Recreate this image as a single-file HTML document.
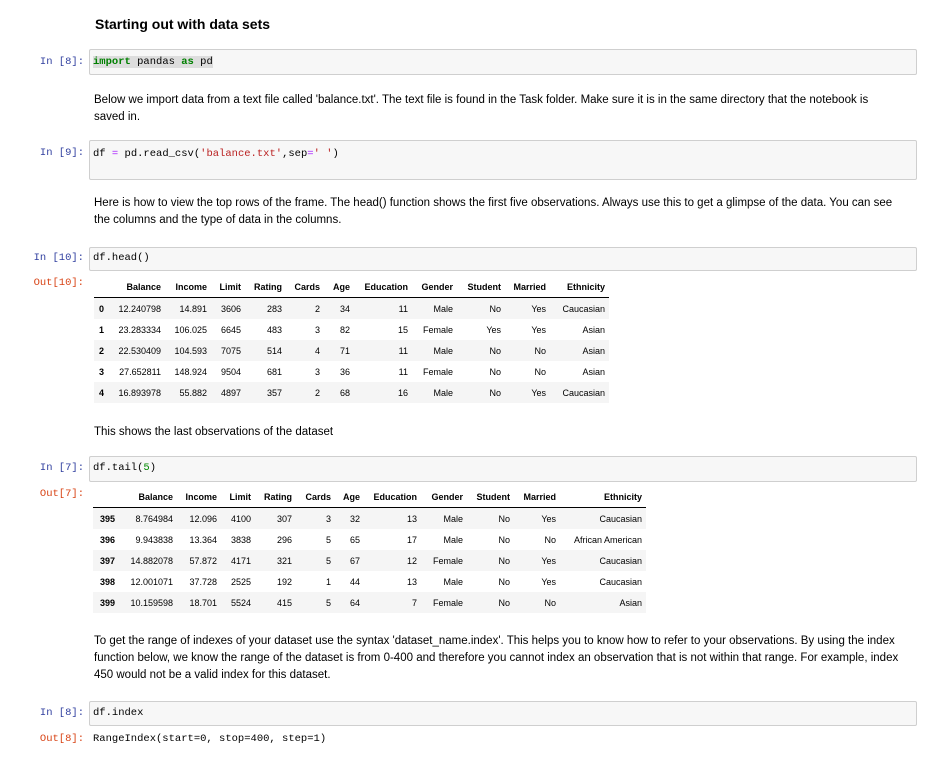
<!DOCTYPE html>
<html><head><meta charset="utf-8"><style>
body{margin:0;width:935px;height:761px;background:#fff;position:relative;font-family:"Liberation Sans",Arial,sans-serif;color:#000;overflow:hidden}
.a{position:absolute}
.p{position:absolute;font-family:"Liberation Mono",monospace;font-size:10.5px;text-align:right;width:84px;left:0;line-height:13px}
.in{color:#303f9f}.out{color:#d84315}
.box{position:absolute;left:89px;width:828px;background:#f7f7f7;border:1px solid #cfcfcf;border-radius:2px;box-sizing:border-box}
.code{position:absolute;left:93px;font-family:"Liberation Mono",monospace;font-size:10.5px;line-height:13px;white-space:pre}
.txt{position:absolute;left:94px;width:815px;font-size:11.5px;line-height:17px}
table{position:absolute;border-collapse:collapse;font-size:9px;table-layout:fixed}
td,th{text-align:right;padding:0 4px 0 0;height:21px;white-space:nowrap;overflow:visible}
th{font-weight:bold}
thead th{border-bottom:1px solid #000;height:20px}
tbody tr:nth-child(odd){background:#f5f5f5}
.k{color:#008000;font-weight:bold}.s{color:#ba2121}.o{color:#aa22ff}.n{color:#080}
</style></head><body>
<div class="a" style="left:95px;top:16px;font-size:14px;font-weight:bold">Starting out with data sets</div>

<div class="p in" style="top:56px">In [8]:</div>
<div class="box" style="top:49px;height:26px"></div>
<div class="code" style="top:56px"><span style="background:#ddd"><span class="k">import</span> pandas <span class="k">as</span> pd</span></div>

<div class="txt" style="top:92px;width:795px">Below we import data from a text file called 'balance.txt'. The text file is found in the Task folder. Make sure it is in the same directory that the notebook is saved in.</div>

<div class="p in" style="top:147px">In [9]:</div>
<div class="box" style="top:140px;height:40px"></div>
<div class="code" style="top:148px">df <span class="o">=</span> pd.read_csv(<span class="s">'balance.txt'</span>,sep<span class="o">=</span><span class="s">' '</span>)</div>

<div class="txt" style="top:195px">Here is how to view the top rows of the frame. The head() function shows the first five observations. Always use this to get a glimpse of the data. You can see the columns and the type of data in the columns.</div>

<div class="p in" style="top:252px">In [10]:</div>
<div class="box" style="top:247px;height:24px"></div>
<div class="code" style="top:252px">df.head()</div>
<div class="p out" style="top:277px">Out[10]:</div>

<table style="left:94px;top:277px;width:515px">
<colgroup><col style="width:14px"><col style="width:57px"><col style="width:46px"><col style="width:34px"><col style="width:41px"><col style="width:38px"><col style="width:30px"><col style="width:58px"><col style="width:45px"><col style="width:48px"><col style="width:45px"><col style="width:59px"></colgroup>
<thead><tr><th></th><th>Balance</th><th>Income</th><th>Limit</th><th>Rating</th><th>Cards</th><th>Age</th><th>Education</th><th>Gender</th><th>Student</th><th>Married</th><th>Ethnicity</th></tr></thead>
<tbody>
<tr><th>0</th><td>12.240798</td><td>14.891</td><td>3606</td><td>283</td><td>2</td><td>34</td><td>11</td><td>Male</td><td>No</td><td>Yes</td><td>Caucasian</td></tr>
<tr><th>1</th><td>23.283334</td><td>106.025</td><td>6645</td><td>483</td><td>3</td><td>82</td><td>15</td><td>Female</td><td>Yes</td><td>Yes</td><td>Asian</td></tr>
<tr><th>2</th><td>22.530409</td><td>104.593</td><td>7075</td><td>514</td><td>4</td><td>71</td><td>11</td><td>Male</td><td>No</td><td>No</td><td>Asian</td></tr>
<tr><th>3</th><td>27.652811</td><td>148.924</td><td>9504</td><td>681</td><td>3</td><td>36</td><td>11</td><td>Female</td><td>No</td><td>No</td><td>Asian</td></tr>
<tr><th>4</th><td>16.893978</td><td>55.882</td><td>4897</td><td>357</td><td>2</td><td>68</td><td>16</td><td>Male</td><td>No</td><td>Yes</td><td>Caucasian</td></tr>
</tbody></table>

<div class="txt" style="top:424px">This shows the last observations of the dataset</div>

<div class="p in" style="top:462px">In [7]:</div>
<div class="box" style="top:456px;height:26px"></div>
<div class="code" style="top:462px">df.tail(<span class="n">5</span>)</div>
<div class="p out" style="top:488px">Out[7]:</div>

<table style="left:93px;top:487px;width:553px">
<colgroup><col style="width:26px"><col style="width:58px"><col style="width:44px"><col style="width:34px"><col style="width:41px"><col style="width:39px"><col style="width:29px"><col style="width:57px"><col style="width:46px"><col style="width:47px"><col style="width:46px"><col style="width:86px"></colgroup>
<thead><tr><th></th><th>Balance</th><th>Income</th><th>Limit</th><th>Rating</th><th>Cards</th><th>Age</th><th>Education</th><th>Gender</th><th>Student</th><th>Married</th><th>Ethnicity</th></tr></thead>
<tbody>
<tr><th>395</th><td>8.764984</td><td>12.096</td><td>4100</td><td>307</td><td>3</td><td>32</td><td>13</td><td>Male</td><td>No</td><td>Yes</td><td>Caucasian</td></tr>
<tr><th>396</th><td>9.943838</td><td>13.364</td><td>3838</td><td>296</td><td>5</td><td>65</td><td>17</td><td>Male</td><td>No</td><td>No</td><td>African American</td></tr>
<tr><th>397</th><td>14.882078</td><td>57.872</td><td>4171</td><td>321</td><td>5</td><td>67</td><td>12</td><td>Female</td><td>No</td><td>Yes</td><td>Caucasian</td></tr>
<tr><th>398</th><td>12.001071</td><td>37.728</td><td>2525</td><td>192</td><td>1</td><td>44</td><td>13</td><td>Male</td><td>No</td><td>Yes</td><td>Caucasian</td></tr>
<tr><th>399</th><td>10.159598</td><td>18.701</td><td>5524</td><td>415</td><td>5</td><td>64</td><td>7</td><td>Female</td><td>No</td><td>No</td><td>Asian</td></tr>
</tbody></table>

<div class="txt" style="top:633px">To get the range of indexes of your dataset use the syntax 'dataset_name.index'. This helps you to know how to refer to your observations. By using the index function below, we know the range of the dataset is from 0-400 and therefore you cannot index an observation that is not within that range. For example, index 450 would not be a valid index for this dataset.</div>

<div class="p in" style="top:707px">In [8]:</div>
<div class="box" style="top:701px;height:25px"></div>
<div class="code" style="top:707px">df.index</div>
<div class="p out" style="top:733px">Out[8]:</div>
<div class="code" style="top:733px">RangeIndex(start=0, stop=400, step=1)</div>
</body></html>
